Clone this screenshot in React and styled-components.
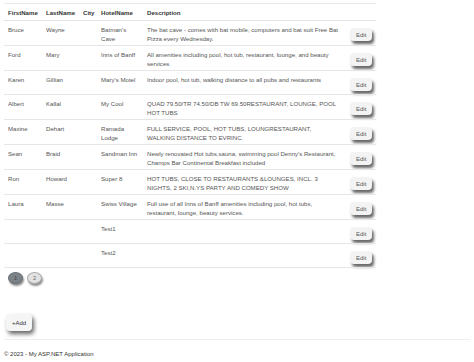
import React from "react";
import styled, { createGlobalStyle } from "styled-components";

const GlobalStyle = createGlobalStyle`
  body {
    margin: 0;
    background: #ffffff;
    font-family: "Liberation Sans", Arial, sans-serif;
    font-size: 6.1px;
    line-height: 9px;
    color: #333;
  }
`;

const Page = styled.div`
  padding: 3px 4px 0 4px;
`;

const Table = styled.table`
  width: 372px;
  table-layout: fixed;
  border-collapse: collapse;
  border-top: 1px solid #e8e8e8;
`;

// $w is the full column width; padding is taken off it
const Th = styled.th`
  width: ${(p) => p.$w - 4 - (p.$pr || 2)}px;
  text-align: left;
  font-weight: bold;
  color: #333;
  padding: 4px ${(p) => p.$pr || 2}px 3px 4px;
  border-bottom: 1px solid #e3e3e3;
  vertical-align: top;
`;

const Td = styled.td`
  color: #555;
  padding: 4px ${(p) => p.$pr || 2}px 2px 4px;
  border-bottom: 1px solid #e6e6e6;
  vertical-align: top;
`;

const EditButton = styled.button`
  display: block;
  margin: 3px 0 1px 0;
  height: 13px;
  padding: 0 6px;
  border: none;
  border-radius: 4px;
  background: #f3f3f3;
  color: #555;
  font-family: inherit;
  font-size: 6px;
  box-shadow: 2px 3px 3px rgba(0, 0, 0, 0.6);
`;

const Pager = styled.div`
  display: flex;
  gap: 4px;
  margin: 4px 0 0 4px;
`;

const PageDot = styled.span`
  width: 13px;
  height: 10px;
  border-radius: 50%;
  display: flex;
  align-items: center;
  justify-content: center;
  font-size: 5.5px;
  color: ${(p) => (p.$active ? "#444" : "#666")};
  background: ${(p) => (p.$active ? "#7b8288" : "#e2e2e2")};
  border: 1px solid ${(p) => (p.$active ? "#6a7076" : "#a8a8a8")};
  box-shadow: 1px 2px 2px rgba(0, 0, 0, 0.45);
`;

const AddButton = styled.button`
  margin: 30px 0 0 2px;
  height: 17px;
  padding: 0 6px;
  border: none;
  border-radius: 4px;
  background: #f5f5f5;
  color: #333;
  font-family: inherit;
  font-size: 6px;
  box-shadow: 2px 3px 4px rgba(0, 0, 0, 0.6);
`;

const Rule = styled.hr`
  border: none;
  border-top: 1px solid #eeeeee;
  margin: 8px 0 0 0;
`;

const Footer = styled.footer`
  padding-top: 10px;
  color: #333;
  font-size: 6px;
`;

const rows = [
  ["Bruce", "Wayne", "", "Batman's Cave", "The bat cave - comes with bat mobile, computers and bat suit Free Bat Pizza every Wednesday."],
  ["Ford", "Mary", "", "Inns of Banff", "All amenities including pool, hot tub, restaurant, lounge, and beauty services"],
  ["Karen", "Gillian", "", "Mary's Motel", "Indoor pool, hot tub, walking distance to all pubs and restaurants"],
  ["Albert", "Kallal", "", "My Cool", "QUAD 79.50/TR 74.50/DB TW 69.50RESTAURANT, LOUNGE, POOL HOT TUBS"],
  ["Maxine", "Dehart", "", "Ramada Lodge", "FULL SERVICE, POOL, HOT TUBS, LOUNGRESTAURANT, WALKING DISTANCE TO EVRINC."],
  ["Sean", "Braid", "", "Sandman Inn", "Newly renovated Hot tubs,sauna, swimming pool Denny's Restaurant, Champs Bar Continental Breakfast included"],
  ["Ron", "Howard", "", "Super 8", "HOT TUBS, CLOSE TO RESTAURANTS &LOUNGES, INCL. 3 NIGHTS, 2 SKI,N.YS PARTY AND COMEDY SHOW"],
  ["Laura", "Masse", "", "Swiss Village", "Full use of all Inns of Banff amenities including pool, hot tubs, restaurant, lounge, beauty services."],
  ["", "", "", "Test1", ""],
  ["", "", "", "Test2", ""],
];

const App = () => {
  return (
    <Page>
      <GlobalStyle />
      <Table>
        <thead>
          <tr>
            <Th $w={38}>FirstName</Th>
            <Th $w={37}>LastName</Th>
            <Th $w={18}>City</Th>
            <Th $w={46}>HotelName</Th>
            <Th $w={203} $pr={6}>Description</Th>
            <Th $w={30}></Th>
          </tr>
        </thead>
        <tbody>
          {rows.map((r, i) => (
            <tr key={i}>
              {r.map((c, j) => (
                <Td key={j} $pr={j === 4 ? 6 : 2}>
                  {c}
                </Td>
              ))}
              <Td>
                <EditButton>Edit</EditButton>
              </Td>
            </tr>
          ))}
        </tbody>
      </Table>
      <Pager>
        <PageDot $active>1</PageDot>
        <PageDot>2</PageDot>
      </Pager>
      <AddButton>+Add</AddButton>
      <Rule />
      <Footer>© 2023 - My ASP.NET Application</Footer>
    </Page>
  );
};

export default App;
